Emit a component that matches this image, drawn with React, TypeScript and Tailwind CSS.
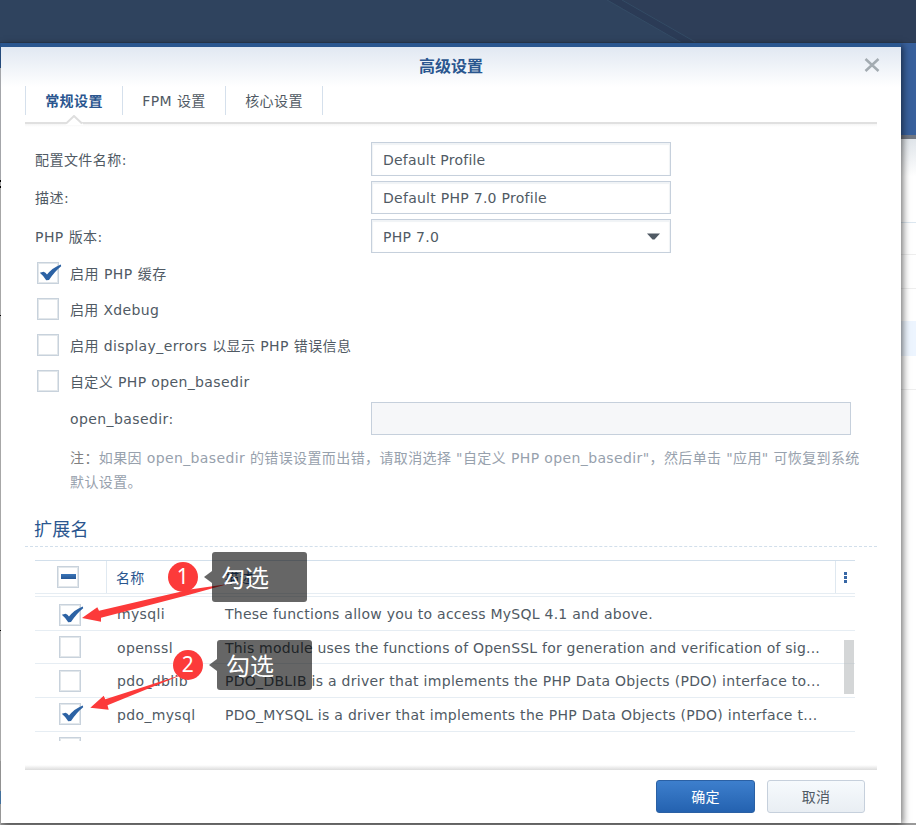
import React, { useState } from 'react';
import clsx from 'clsx';

interface Extension {
  name: string;
  description: string;
  enabled: boolean;
  rowClass: string;
  boxClass: string;
  textClass: string;
  descClass: string;
}

const TABS = [
  { label: '常规设置', width: 'w-[97px]' },
  { label: 'FPM 设置', width: 'w-[103px]' },
  { label: '核心设置', width: 'w-[97px]' },
];

const OPTIONS = [
  { label: '启用 PHP 缓存', checked: true, tracking: 'tracking-[0.48px]' },
  { label: '启用 Xdebug', checked: false, tracking: 'tracking-[0.33px]' },
  { label: '启用 display_errors 以显示 PHP 错误信息', checked: false, tracking: 'tracking-[0.41px]' },
  { label: '自定义 PHP open_basedir', checked: false, tracking: 'tracking-[0.37px]' },
];

const EXTENSIONS: Extension[] = [
  { name: 'mysqli', description: 'These functions allow you to access MySQL 4.1 and above.', enabled: true, rowClass: 'h-[34px]', boxClass: 'pt-[7px]', textClass: 'pt-[7px]', descClass: 'tracking-[0.25px]' },
  { name: 'openssl', description: 'This module uses the functions of OpenSSL for generation and verification of sig...', enabled: false, rowClass: 'h-[33px]', boxClass: 'pt-[5px]', textClass: 'pt-[7px]', descClass: 'tracking-[0.21px]' },
  { name: 'pdo_dblib', description: 'PDO_DBLIB is a driver that implements the PHP Data Objects (PDO) interface to...', enabled: false, rowClass: 'h-[34px]', boxClass: 'pt-[6px]', textClass: 'pt-[7px]', descClass: 'tracking-[0.29px]' },
  { name: 'pdo_mysql', description: 'PDO_MYSQL is a driver that implements the PHP Data Objects (PDO) interface t...', enabled: true, rowClass: 'h-[34px]', boxClass: 'pt-[5px]', textClass: 'pt-[7px]', descClass: 'tracking-[0.28px]' },
  { name: '', description: '', enabled: false, rowClass: 'h-[34px]', boxClass: 'pt-[5px]', textClass: '', descClass: '' },
];

function Checkbox({ checked, partial, onClick }: { checked?: boolean; partial?: boolean; onClick?: () => void }) {
  return (
    <button
      onClick={onClick}
      className="relative block size-[22px] shrink-0 border border-[#c8d2dc] bg-white shadow-[inset_0_0_0_1px_#e2e7eb]"
    >
      {checked && (
        <svg className="absolute top-0 left-px overflow-visible" width="22" height="20" viewBox="0 0 22 20">
          <path d="M0.8 9.8 L4.6 8.8 Q6.6 9.6 8 11.6 Q13 4.8 21.8 1.4 L22.2 3.2 Q15.6 8.4 10 17 L7.2 17.2 Q4.5 12.8 0.8 9.8Z" fill="#2c62a4" />
        </svg>
      )}
      {partial && <span className="absolute top-[7px] left-[3px] h-[5px] w-[15px] bg-gradient-to-b from-[#3a75b8] to-[#275896]" />}
    </button>
  );
}

function Backdrop() {
  return (
    <div className="absolute inset-0 flex flex-col bg-white">
      <div className="h-[43px] bg-[#2f435e]">
        <svg width="916" height="43" className="block">
          <path d="M622 0 L916 0 L916 43 L697 43Z" fill="#2e3e58" />
          <path d="M608 0 L622 0 L697 43 L682 43Z" fill="#2b3b56" />
          <path d="M607 0 L682 43 M622 0 L697 43" stroke="#344b65" fill="none" />
          <path d="M0 42.5H916" stroke="#2b3a50" />
        </svg>
      </div>
      <div className="h-[92px] bg-[#38609c]" />
      <div className="h-1 bg-[#727883]" />
      <div className="h-[84px] border-b border-[#dce7f0] bg-gradient-to-b from-[#e0e5ea] to-white to-45%" />
      <div className="h-[32px] border-b border-[#eeeeee]" />
      <div className="h-[34px] border-b border-[#eeeeee]" />
      <div className="h-[32px]" />
      <div className="h-[35px] bg-[#edf5ff]" />
      <div className="h-[34px] border-b border-[#eeeeee]" />
      <div className="flex-1" />
      <div className="h-0.5 bg-[#999]" />
    </div>
  );
}

// Left sliver of the page that stays visible beside the dialog
function LeftEdge() {
  return (
    <div className="absolute top-[43px] left-0 flex w-px flex-col">
      <div className="h-[25px] bg-[#2a568f]" />
      <div className="h-[112px] bg-[#bfc1c5]" />
      <div className="h-0.5 bg-black" />
      <div className="h-1 bg-[#bbb]" />
      <div className="h-0.5 bg-black" />
      <div className="h-[127px] bg-[#c2c2c2]" />
      <div className="h-px bg-black" />
      <div className="h-[314px] bg-[#c2c2c2]" />
      <div className="h-px bg-black" />
      <div className="h-[130px] bg-[#c2c2c2]" />
      <div className="h-[30px] bg-[#a9a9a9]" />
      <div className="h-[13px] bg-[#4d82b5]" />
      <div className="h-[21px] bg-[#b0b0b0]" />
    </div>
  );
}

function Callout({ step, className }: { step: number; className: string }) {
  return (
    <div className={clsx('absolute flex items-center', className)}>
      <span className="flex size-[30px] items-center justify-center rounded-full bg-[#fc3a3a] pb-0.5 font-['Noto_Sans','Noto_Sans_CJK_SC',sans-serif] text-[21px] text-white">
        {step}
      </span>
      <svg className="ml-[6px]" width="8" height="12" viewBox="0 0 8 12">
        <path d="M8 0V12L0 6Z" fill="rgba(0,0,0,0.6)" />
      </svg>
      <span className="flex h-[50px] w-[95px] items-center rounded-[3px] bg-black/60 pt-1 pl-[9px] text-[24px] tracking-normal text-white">
        勾选
      </span>
    </div>
  );
}

export default function App() {
  const [activeTab, setActiveTab] = useState(0);
  const [options, setOptions] = useState(OPTIONS);
  const [extensions, setExtensions] = useState(EXTENSIONS);

  const toggleOption = (index: number) => {
    setOptions(prev => prev.map((o, i) => (i === index ? { ...o, checked: !o.checked } : o)));
  };

  const toggleExtension = (index: number) => {
    setExtensions(prev => prev.map((e, i) => (i === index ? { ...e, enabled: !e.enabled } : e)));
  };

  return (
    <div className="relative h-[825px] w-[916px] overflow-hidden font-['DejaVu_Sans','Noto_Sans_CJK_SC',sans-serif] text-[14px] leading-5 tracking-[0.3px] text-[#505a64]">
      <Backdrop />
      <LeftEdge />

      <div className="relative mt-[43px] ml-px flex h-[780px] w-[900px] flex-col border-t-4 border-[#2a568f] bg-gradient-to-b from-[#e1e8f2] to-white to-[40px] shadow-[2px_2px_7px_rgba(0,0,0,0.55)]">
        {/* Title */}
        <div className="flex h-[39px] items-center justify-between pr-[21px]">
          <span className="w-[37px]" />
          <h1 className="text-[16px] font-bold tracking-normal text-[#2a568f]">高级设置</h1>
          <button className="pb-[3px]">
            <svg width="16" height="14" viewBox="0 0 16 14">
              <path d="M1.5 1L14.5 13M14.5 1L1.5 13" stroke="#a3abb1" strokeWidth="2.5" />
            </svg>
          </button>
        </div>

        {/* Tabs */}
        <div className="mx-6 h-[41px]">
          <div className="flex h-[29px] border-l border-[#d5e0ec]">
            {TABS.map((tab, i) => (
              <button
                key={tab.label}
                onClick={() => setActiveTab(i)}
                className={clsx(
                  'relative border-r border-[#d5e0ec] text-center tracking-[0.4px]',
                  tab.width,
                  activeTab === i && 'font-bold text-[#2a568f]'
                )}
              >
                {tab.label}
                {activeTab === i && (
                  <svg className="absolute top-[29px] left-[40px]" width="17" height="10" viewBox="0 0 17 10">
                    <path d="M0 9L8.5 0.5L17 9V10H0Z" fill="#fff" />
                    <path d="M0 8.5L8 1L16 8.5" fill="none" stroke="#dedede" strokeWidth="2" />
                  </svg>
                )}
              </button>
            ))}
          </div>
          <div className="mt-[7px] h-0.5 bg-[#e0e0e0]" />
          <div className="h-[3px] bg-gradient-to-b from-[#f5f5f5] to-white" />
        </div>

        {/* Profile fields */}
        <div className="mt-[15px] flex flex-col gap-[5px] pl-[34px]">
          <div className="flex h-[34px] items-center">
            <label className="w-[336px] pt-0.5 tracking-[0.45px]">配置文件名称:</label>
            <input defaultValue="Default Profile" className="h-full w-[300px] border border-[#c6d0dc] bg-white px-[11px] pt-0.5 tracking-[0.22px] shadow-[inset_0_1px_1px_1px_#f0f3f6] outline-none" />
          </div>
          <div className="flex h-[33px] items-center">
            <label className="w-[336px] tracking-[0.45px]">描述:</label>
            <input defaultValue="Default PHP 7.0 Profile" className="h-full w-[300px] border border-[#c6d0dc] bg-white px-[11px] tracking-[0.27px] shadow-[inset_0_1px_1px_1px_#f0f3f6] outline-none" />
          </div>
          <div className="flex h-[34px] items-center">
            <label className="w-[336px] pt-0.5 tracking-[0.45px]">PHP 版本:</label>
            <button className="flex h-full w-[300px] items-center justify-between border border-[#c6d0dc] bg-white pr-[10px] pl-[11px] shadow-[inset_0_1px_1px_1px_#f0f3f6]">
              <span className="pt-0.5">PHP 7.0</span>
              <svg width="13" height="7" viewBox="0 0 13 7">
                <path d="M0 0.5H13L7.5 6.5H5.5Z" fill="#505a64" />
              </svg>
            </button>
          </div>
        </div>

        {/* Options */}
        <div className="mt-[9px] flex flex-col gap-[14px] pl-[36px]">
          {options.map((option, i) => (
            <div key={option.label} className="flex h-[22px] items-center gap-[11px]">
              <Checkbox checked={option.checked} onClick={() => toggleOption(i)} />
              <span className={clsx('pt-0.5 whitespace-nowrap', option.tracking)}>{option.label}</span>
            </div>
          ))}
        </div>

        <div className="mt-[10px] flex h-[33px] items-center pl-[69px]">
          <label className="w-[301px] tracking-[0.4px]">open_basedir:</label>
          <input disabled className="h-full w-[480px] border border-[#c6d0dc] bg-[#f6f7f9]" />
        </div>
        <div className="mt-[11px] pl-[69px] leading-6 tracking-[0.38px] whitespace-nowrap text-[#97a1ad]">
          <p><span className="text-[#808080]">注：</span>如果因 open_basedir 的错误设置而出错，请取消选择 "自定义 PHP open_basedir"，然后单击 "应用" 可恢复到系统</p>
          <p>默认设置。</p>
        </div>

        {/* Extensions */}
        <h2 className="mx-6 mt-[22px] h-[31px] border-b border-dashed border-[#d2dfeb] pl-[9px] text-[18px] leading-7 tracking-[0.2px] text-[#2a568f]">扩展名</h2>

        <div className="mt-[13px] ml-[34px] w-[820px]">
          <div className="flex h-[34px] items-center border-y border-t-[#d2dfeb] border-b-[#e6edf3] text-[#2a568f]">
            <div className="flex h-[32px] w-[71px] items-center pl-[22px]">
              <Checkbox partial />
            </div>
            <div className="flex h-[32px] w-[109px] items-center border-l border-[#e0e9f1] pt-0.5 pl-[9px]">名称</div>
            <div className="w-[620px] pt-0.5 pl-[10px]">描述</div>
            <button className="flex h-[32px] flex-1 flex-col items-center justify-center gap-px border-l border-[#dfe8f0]">
              <span className="size-[3px] bg-[#3767a5]" />
              <span className="size-[3px] bg-[#3767a5]" />
              <span className="size-[3px] bg-[#3767a5]" />
            </button>
          </div>
          <div className="relative mt-0.5 h-[145px] overflow-hidden border-t border-[#e6edf3]">
            {extensions.map((ext, i) => (
              <div key={ext.name} className={clsx('flex items-start border-b border-[#e6edf3]', ext.rowClass)}>
                <div className={clsx('w-[82px] pl-6', ext.boxClass)}>
                  <Checkbox checked={ext.enabled} onClick={() => toggleExtension(i)} />
                </div>
                <span className={clsx('w-[108px] tracking-[0.35px] whitespace-nowrap', ext.textClass)}>{ext.name}</span>
                <span className={clsx('whitespace-nowrap', ext.textClass, ext.descClass)}>{ext.description}</span>
              </div>
            ))}
            <div className="absolute top-[43px] right-px h-[54px] w-[10px] bg-[#b8babd]/60" />
          </div>
        </div>

        {/* Footer */}
        <div className="mx-6 mt-[24px] h-[5px] bg-gradient-to-b from-white to-[#dcdcdc]" />
        <div className="mt-[10px] flex justify-end gap-3 pr-[36px]">
          <button className="h-[33px] w-[99px] rounded-[3px] border border-[#2a60a4] bg-gradient-to-b from-[#3d7fcd] to-[#2462b0] text-white">确定</button>
          <button className="h-[33px] w-[98px] rounded-[3px] border border-[#c6d0dc] bg-gradient-to-b from-[#f6fafd] to-[#e9eef3]">取消</button>
        </div>
      </div>

      {/* Walkthrough marks */}
      <svg className="pointer-events-none absolute inset-0" width="916" height="825" viewBox="0 0 916 825">
        <path d="M82 618L97.3 607.3L99 610.7L190 589.5L228 584L190 594.5L101 617.7V621.8Z" fill="#fc3a3a" />
        <path d="M90.3 707.7L103.7 695.7L105.3 699.3L184 674L107.5 705.3L108.7 709.8Z" fill="#fc3a3a" />
      </svg>
      <Callout step={1} className="top-[552px] left-[168px]" />
      <Callout step={2} className="top-[640px] left-[173px]" />
    </div>
  );
}
